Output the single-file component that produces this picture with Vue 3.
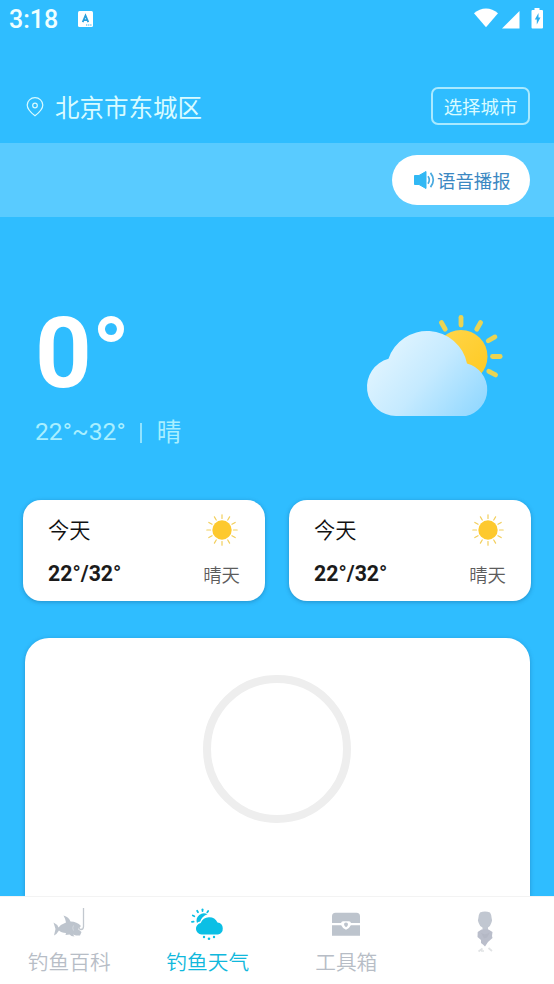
<script setup>
const days = [
  { id: 1, name: '今天', range: '22°/32°', text: '晴天' },
  { id: 2, name: '今天', range: '22°/32°', text: '晴天' },
]
const rays = Array.from({ length: 12 }, (_, i) => i * 30)
const bigRays = [-30, 0, 30, 60, 90, 118]
const miniRays = [-100, -65, -30, 0, 32]
</script>

<template>
  <div class="screen">
    <header class="status">
      <span class="time">3:18</span>
      <svg class="app-badge" viewBox="0 0 15 16">
        <rect width="15" height="16" rx="1.5" fill="#fff" />
        <path d="M4.700 11.200 7.500 4.500l2.800 6.700M5.600 9.200h3.800" fill="none" stroke="#2a9fdc" stroke-width="1.8" />
        <path d="M8 14h5.5" stroke="#2ab0ee" stroke-width="1" stroke-dasharray="1.3 .8" />
      </svg>
      <svg class="signals" viewBox="0 0 70 21">
        <path d="M0 5.300C7-1 17-1 24 5.300L12 19.300Z" fill="#fff" />
        <path d="M45.5 3v17.500H28Z" fill="#fff" />
        <path d="M60.500 0h5v2h2.500q1 0 1 1v16.500q0 1-1 1H58.500q-1 0-1-1V3q0-1 1-1h2Z" fill="#fff" />
        <path d="M64.500 5l-3.700 6.500h2v5l3.700-7h-2Z" fill="#2baff0" />
      </svg>
    </header>

    <section class="location">
      <svg class="pin" viewBox="0 0 18 20" fill="none" stroke="#d9fbff" stroke-width="1.200">
        <path d="M9 18.800C6 16.500 1.200 12 1.200 8a7.800 7.300 0 0 1 15.600 0c0 4-4.800 8.500-7.800 10.800Z" />
        <circle cx="9" cy="8.500" r="2.300" />
      </svg>
      <span class="city">北京市东城区</span>
      <button class="choose">选择城市</button>
    </section>

    <section class="band">
      <button class="voice">
        <svg class="speaker" viewBox="0 0 21 18">
          <path d="M.5 4.500h4.500L12 .5v17L5 13.500H.5Z" fill="#31b8f4" stroke="#31b8f4" stroke-linejoin="round" />
          <path d="M14 5.300q2.600 3.700 0 7.400M16.500 1.900q5.600 7.100 0 14.200" fill="none" stroke="#4aaae0" stroke-width="1.700" />
        </svg>
        <span>语音播报</span>
      </button>
    </section>

    <section class="hero">
      <div>
        <div class="degree">0°</div>
        <div class="range"><span>22°~32°</span><i></i><span>晴</span></div>
      </div>
      <svg class="cloud" viewBox="0 0 138 104">
        <defs>
          <linearGradient id="cloudFill" x1="0" y1=".25" x2="1" y2=".85">
            <stop offset="0" stop-color="#e5f6ff" />
            <stop offset=".5" stop-color="#c5eaff" />
            <stop offset="1" stop-color="#92d8ff" />
          </linearGradient>
          <linearGradient id="sunFill" x1="0" y1="0" x2="1" y2="1">
            <stop offset="0" stop-color="#ffd64c" />
            <stop offset="1" stop-color="#ffc91f" />
          </linearGradient>
        </defs>
        <circle cx="96" cy="43.500" r="26.500" fill="url(#sunFill)" />
        <path v-for="r in bigRays" :key="r" d="M96 4.300v7.700" :transform="`rotate(${r} 96 43.500)`" stroke="#ead453" stroke-width="4.800" stroke-linecap="round" />
        <path d="M31 103A29.100 29.100 0 0 1 23.500 45.800A40.700 40.700 0 0 1 102 50.500A27 27 0 0 1 101 103Z" fill="url(#cloudFill)" />
      </svg>
    </section>

    <section class="days">
      <article v-for="day in days" :key="day.id" class="day">
        <div class="row">
          <span class="name">{{ day.name }}</span>
          <svg class="sun" viewBox="0 0 32 32">
            <circle cx="16" cy="16" r="9.700" fill="#fdc92f" />
            <path v-for="r in rays" :key="r" d="M16 .8v3.700" :transform="`rotate(${r} 16 16)`" stroke="#f2cf5c" stroke-width="1.200" stroke-linecap="round" />
          </svg>
        </div>
        <div class="row">
          <b>{{ day.range }}</b>
          <span class="text">{{ day.text }}</span>
        </div>
      </article>
    </section>

    <section class="panel"><div class="dial"></div></section>

    <nav class="tabs">
      <div class="tab">
        <svg class="icon" viewBox="0 0 34 34">
          <path d="M1.500 14.500Q5 16 6.500 19.500Q9.500 16 14 14.500Q13.500 11 11.500 7.500Q17 9 18.500 13.500Q25 13.500 29 18L26 21l3.500 3-1.500 3.500H24l-3-1 1.500 2q-3.500 0-5-2l-4 .5.5-2Q9 24.500 7 22.500Q5 26 2 27.500L3.500 21Z" fill="#bdc4cd" />
          <path d="M21.500 17.500q-1.500 2.500 0 5" fill="none" stroke="#dfe3e7" stroke-width=".6" />
          <path d="M31.500 0v18.500q0 3-2.500 3-2 0-2-2.500" fill="none" stroke="#c2c8cf" stroke-width="1.300" />
        </svg>
        <span>钓鱼百科</span>
      </div>
      <div class="tab active">
        <svg class="icon" viewBox="0 0 34 34">
          <g fill="#0bbfe5">
            <path d="M6 15A7.300 7.300 0 0 1 16.500 6.300Q10.500 8.500 9.200 13.500Q7 13.500 6 15Z" />
            <path d="M10.500 26.500A5.800 5.800 0 0 1 9.700 15A9.200 9.200 0 0 1 26.500 14.500A6.100 6.100 0 0 1 27 26.500Z" />
            <circle cx="13" cy="29" r="1.200" /><circle cx="18" cy="30.800" r="1.300" /><circle cx="23" cy="29" r="1.200" />
          </g>
          <path v-for="r in miniRays" :key="r" d="M11.500 1.300v1.700" :transform="`rotate(${r} 11.500 12)`" stroke="#0bbfe5" stroke-width="1.800" stroke-linecap="round" />
        </svg>
        <span>钓鱼天气</span>
      </div>
      <div class="tab">
        <svg class="icon" viewBox="0 0 34 34">
          <path d="M3 15V8.300q0-3.500 3.500-3.500h21Q31 4.800 31 8.300V15h-9q-.500-1.800-2-1.800h-6q-1.500 0-2 1.800ZM3 17.200h9.200q1.500 3.500 4.800 4.500 3.300-1 4.800-4.500H31v10.600H3Z" fill="#bdc4cd" />
          <path d="M17 14.500q2 0 2 1.800T17 19.200q-2-1.200-2-2.900t2-1.800Z" fill="#bdc4cd" />
        </svg>
        <span>工具箱</span>
      </div>
      <div class="tab">
        <svg class="profile" viewBox="0 0 24 44">
          <path d="M7 1.500Q12-.5 17 1.500Q18.700 4 18.700 7.500Q19.700 9 18.300 12Q17.500 15 15 16.500V20H9.500V16.500Q6.500 15 5.700 12Q4.300 9 5.300 7.500Q5.300 4 7 1.500Z" fill="#c1c7d1" />
          <path d="M8.500 18.500h7l4 2.500-.5 4 .5 2-4.500 4-3 4.500-1.500-1.500-2.500-2v-3L4.500 26l.2-5Z" fill="#babecb" />
          <path d="M8 22l4 1.500 5-2-3 5-3 1Z" fill="#b4b8c5" />
          <path d="M5.500 40.500l4-3M15.500 37l3.500 3M8 40h3" stroke="#e1e3e5" stroke-width="1.700" />
        </svg>
      </div>
    </nav>
  </div>
</template>

<style>
body { margin: 0; }
</style>

<style scoped>
.screen {
  width: 554px;
  height: 984px;
  box-sizing: border-box;
  display: flex;
  flex-direction: column;
  overflow: hidden;
  background: #2fbdff;
  font-family: Roboto, "Noto Sans CJK SC", sans-serif;
}
button { font-family: inherit; padding: 0; box-sizing: border-box; }
svg { display: block; flex: none; overflow: visible; }
.status { height: 38px; flex: none; display: flex; align-items: center; padding: 0 10px 0 9px; color: #efffff; }
.time { font-size: 25px; font-weight: 500; line-height: 38px; width: 69px; padding-top: 2px; }
.app-badge { width: 15px; height: 16px; margin-bottom: 1px; }
.signals { width: 70px; height: 21px; margin-left: auto; margin-bottom: 2px; }
.location { height: 105px; flex: none; box-sizing: border-box; display: flex; align-items: center; padding: 31px 24px 0 26px; color: #d9fbff; }
.pin { width: 18px; height: 20px; margin-top: 1px; }
.city { font-size: 24.5px; line-height: 36px; margin-left: 11px; padding-top: 5px; }
.choose { width: 99px; height: 38px; margin-left: auto; border: 2px solid #a9e9ff; border-radius: 7px; background: none; color: #d9fbff; font-size: 18.400px; padding-bottom: 1px; }
.band { height: 74px; flex: none; display: flex; align-items: center; justify-content: flex-end; padding-right: 24px; background: #59cbff; }
.voice { width: 138px; height: 50px; border: 0; border-radius: 25px; background: #fff; display: flex; align-items: center; padding-left: 22px; gap: 2px; color: #3b88c2; font-size: 18.400px; }
.speaker { width: 21px; height: 18px; }
.hero { height: 283px; flex: none; box-sizing: border-box; display: flex; justify-content: space-between; padding: 77px 51px 0 35px; }
.degree { height: 117px; font-size: 99px; line-height: 119px; font-weight: 700; color: #fff; }
.range { display: flex; align-items: center; height: 36px; margin-top: 3px; font-size: 24.500px; line-height: 36px; color: #a9efff; }
.range span:first-child { letter-spacing: .1px; }
.range i { width: 2px; height: 20px; margin: 2px 14.500px 0; background: #91e3ff; }
.range span:last-child { padding-top: 1px; }
.cloud { width: 138px; height: 104px; margin-top: 19px; }
.days { display: flex; gap: 24px; padding: 0 23px; height: 101px; flex: none; }
.day { flex: 1; box-sizing: border-box; padding: 14px 25px 0; border-radius: 18px; background: #fff; box-shadow: 0 1px 4px rgba(20, 90, 140, .45); }
.row { display: flex; align-items: center; justify-content: space-between; height: 32px; }
.row + .row { margin-top: 11px; }
.name { font-size: 21.200px; font-weight: 350; color: #111; padding-bottom: 3px; }
.sun { width: 32px; height: 32px; margin-right: 2px; }
.row b { font-size: 21.300px; font-weight: 700; color: #1b1b1b; }
.text { font-size: 18.400px; font-weight: 350; color: #5c5c5c; padding-top: 2px; }
.panel { flex: 1; margin: 37px 24.500px 0; border-radius: 24px 24px 0 0; background: #fff; box-shadow: 0 1px 4px rgba(20, 90, 140, .4); display: flex; justify-content: center; padding-top: 37px; }
.dial { width: 148px; height: 148px; box-sizing: border-box; border: 8px solid #eee; border-radius: 50%; }
.tabs { position: relative; height: 88px; flex: none; box-sizing: border-box; display: grid; grid-template-columns: repeat(4, 1fr); border-top: 1px solid #f3f3f3; background: #fff; }
.tab { display: flex; flex-direction: column; align-items: center; padding-top: 11px; font-size: 20.700px; font-weight: 350; line-height: 30px; color: #b7bdc6; }
.tab span { margin-top: 6px; }
.active { color: #10b8dc; }
.icon { width: 34px; height: 34px; }
.profile { width: 24px; height: 44px; margin-top: 3px; }
</style>
